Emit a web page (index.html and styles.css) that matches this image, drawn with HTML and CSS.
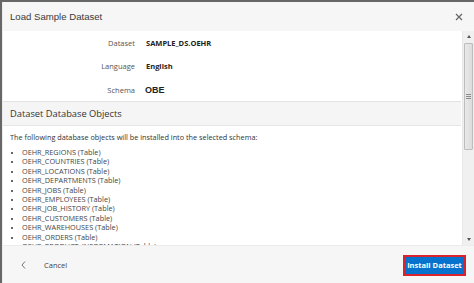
FILE: index.html
```html
<!DOCTYPE html>
<html>
<head>
<meta charset="utf-8">
<link rel="stylesheet" href="styles.css">
</head>
<body>
<div class="frame">
  <div class="dialog">
    <div class="dlg-header">
      <span class="dlg-title">Load Sample Dataset</span>
      <svg class="close" width="8" height="8" viewBox="0 0 8 8"><path d="M1 1L7 7M7 1L1 7" stroke="#666" stroke-width="1.2"/></svg>
    </div>
    <div class="dlg-content">
      <div class="scroll">
        <div class="form">
          <div class="row"><span class="lbl">Dataset</span><span class="val">SAMPLE_DS.OEHR</span></div>
          <div class="row"><span class="lbl">Language</span><span class="val">English</span></div>
          <div class="row"><span class="lbl">Schema</span><span class="val big">OBE</span></div>
        </div>
        <div class="region">
          <div class="region-hd">Dataset Database Objects</div>
          <div class="region-bd">
            <p class="intro">The following database objects will be installed into the selected schema:</p>
            <ul class="objs">
              <li>OEHR_REGIONS (Table)</li>
              <li>OEHR_COUNTRIES (Table)</li>
              <li>OEHR_LOCATIONS (Table)</li>
              <li>OEHR_DEPARTMENTS (Table)</li>
              <li>OEHR_JOBS (Table)</li>
              <li>OEHR_EMPLOYEES (Table)</li>
              <li>OEHR_JOB_HISTORY (Table)</li>
              <li>OEHR_CUSTOMERS (Table)</li>
              <li>OEHR_WAREHOUSES (Table)</li>
              <li>OEHR_ORDERS (Table)</li>
              <li>OEHR_PRODUCT_INFORMATION (Table)</li>
            </ul>
          </div>
        </div>
      </div>
      <div class="sbar">
        <div class="arrow up"></div>
        <div class="track">
          <div class="thumb"><span class="grip"></span></div>
        </div>
        <div class="arrow down"></div>
      </div>
    </div>
    <div class="dlg-footer">
      <div class="back">
        <svg width="5" height="8" viewBox="0 0 5 8"><path d="M4 0.5L1 4L4 7.5" fill="none" stroke="#666" stroke-width="0.9"/></svg>
        <span class="cancel">Cancel</span>
      </div>
      <button class="install">Install Dataset</button>
    </div>
  </div>
</div>
</body>
</html>
```

FILE: styles.css
```css
* { box-sizing: border-box; }
html, body { margin: 0; padding: 0; }
body {
  width: 474px;
  height: 283px;
  overflow: hidden;
  background: #fff;
  font-family: "Open Sans", "Noto Sans", sans-serif;
  color: #333;
}
.frame {
  width: 474px;
  height: 283px;
  border-top: 2px solid #676767;
  border-left: 2px solid #676767;
  background: #ececec;
  padding-left: 1px;
}
.dialog {
  height: 281px;
  display: flex;
  flex-direction: column;
  background: #f6f6f6;
}
.dlg-header {
  height: 29px;
  flex: none;
  display: flex;
  align-items: center;
  justify-content: space-between;
  padding: 0 11px 0 7px;
  background: #f6f6f6;
}
.dlg-title {
  font-family: "Liberation Sans", Arial, sans-serif;
  font-size: 9.6px;
  color: #3a3a3a;
}
.close { margin-top: 1px; }
.dlg-content {
  height: 214px;
  flex: none;
  display: flex;
  background: #fff;
}
.scroll {
  width: 458px;
  overflow: hidden;
  background: #fff;
}
.form {
  height: 70px;
  padding-top: 0;
}
.row {
  height: 23.5px;
  display: flex;
  align-items: center;
}
.lbl {
  width: 132px;
  text-align: right;
  font-size: 7.5px;
  color: #555;
}
.val {
  margin-left: 11px;
  font-size: 7.5px;
  font-weight: 700;
  color: #222;
}
.val.big {
  font-family: "Liberation Sans", Arial, sans-serif;
  font-size: 9px;
  margin-left: 10px;
}
.region {
  border-top: 1px solid #e3e3e3;
}
.region-hd {
  height: 24px;
  display: flex;
  align-items: center;
  padding-left: 7px;
  background: #f5f5f5;
  border-bottom: 1px solid #e6e6e6;
  font-size: 9.3px;
  color: #333;
}
.region-bd {
  padding: 6px 7px 0;
}
.intro {
  margin: 0 0 5px;
  font-size: 7.3px;
  line-height: 11px;
  color: #333;
}
.objs {
  margin: 0;
  padding-left: 12px;
  font-size: 7.3px;
  line-height: 9.4px;
  color: #444;
}
.objs li::marker { font-size: 6px; color: #333; }
.sbar {
  width: 12px;
  margin-left: 1px;
  display: flex;
  flex-direction: column;
  background: #f0f0f0;
  border-left: 1px solid #e8e8e8;
}
.arrow {
  height: 11px;
  flex: none;
  display: flex;
  align-items: center;
  justify-content: center;
}
.arrow::before {
  content: "";
  border-left: 2.5px solid transparent;
  border-right: 2.5px solid transparent;
}
.arrow.up::before { border-bottom: 3px solid #555; }
.arrow.down::before { border-top: 3px solid #555; }
.track {
  flex: 1;
  padding: 1px 0 0;
}
.thumb {
  height: 107px;
  margin: 0 1px;
  border: 1px solid #bdbdbd;
  border-radius: 1px;
  background: linear-gradient(to right, #e9e9e9, #dcdcdc);
  display: flex;
  align-items: center;
  justify-content: center;
}
.grip {
  width: 5px;
  height: 5px;
  background: repeating-linear-gradient(to bottom, #8a8a8a 0 1px, transparent 1px 2px);
}
.dlg-footer {
  flex: 1;
  display: flex;
  align-items: center;
  justify-content: space-between;
  padding: 0 8px 0 18px;
  background: #f6f6f6;
  border-top: 1px solid #ececec;
}
.back {
  display: flex;
  align-items: center;
  gap: 18px;
}
.cancel {
  font-size: 7.5px;
  color: #444;
}
.install {
  width: 63px;
  height: 21px;
  margin-top: 1px;
  padding: 0;
  border: 2px solid #d9232e;
  background: #0572ce;
  color: #fff;
  font-family: "Open Sans", sans-serif;
  font-size: 7.5px;
  font-weight: 700;
}
```
